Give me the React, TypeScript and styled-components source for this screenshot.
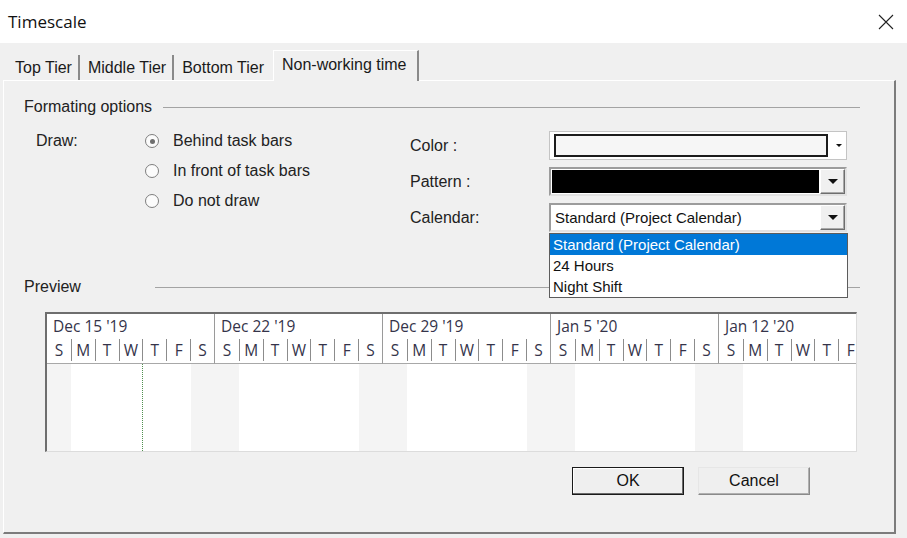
import styled, { createGlobalStyle } from "styled-components"

const GlobalStyle = createGlobalStyle`
html, body {
    margin: 0;
    padding: 0;
    background: #fff;
}
body {
    font-family: "Liberation Sans", Arial, sans-serif;
    color: #222;
}
`

const Window = styled.div`
width: 907px;
height: 538px;
display: flex;
flex-direction: column;
background: #fff;
overflow: hidden;
`

const TitleBar = styled.div`
height: 43px;
flex: none;
display: flex;
align-items: center;
justify-content: space-between;
padding: 0 13px 0 8px;
box-sizing: border-box;
font-family: "Open Sans", "Noto Sans", sans-serif;
font-size: 17px;
color: #111;
`

const CloseButton = styled.div`
width: 16px;
height: 16px;
display: flex;
margin-top: 1px;
`

const DialogBody = styled.div`
flex: 1;
min-height: 0;
display: flex;
flex-direction: column;
background: #f0f0f0;
padding: 7px 11px 4px 3px;
`

const TabStrip = styled.div`
height: 30px;
flex: none;
display: flex;
align-items: flex-end;
padding-left: 4px;
position: relative;
z-index: 1;
`

const Tab = styled.div<{ $active?: boolean; $separator?: boolean }>`
font-size: 16px;
display: flex;
align-items: center;
box-sizing: border-box;
color: #1a1a1a;
${p => p.$active ? `
    height: 31px;
    margin-bottom: -1px;
    padding: 0 11px 3px 8px;
    background: #f0f0f0;
    border-top: 1px solid #fff;
    border-left: 1px solid #fff;
    border-right: 2px solid #8a8a8a;
` : `
    height: 25px;
    padding: 0 ${p.$separator ? 6 : 9}px 0 8px;
    border-right: ${p.$separator ? "2px solid #8a8a8a" : "none"};
`}
`

const Panel = styled.div`
flex: 1;
min-height: 0;
display: flex;
flex-direction: column;
border-top: 1px solid #fff;
border-left: 1px solid #fff;
border-right: 2px solid #7c7c7c;
border-bottom: 2px solid #7c7c7c;
padding: 0 34px 0 20px;
`

const GroupHeader = styled.div<{ $labelWidth: number; $top: number }>`
display: grid;
grid-template-columns: ${p => p.$labelWidth}px 1fr;
align-items: center;
height: 20px;
margin-top: ${p => p.$top}px;
font-size: 16px;
`

const GroupLine = styled.div`
height: 1px;
background: #a3a3a3;
`

const OptionsRow = styled.div`
display: flex;
margin-top: 14px;
font-size: 16px;
`

const DrawLabel = styled.div`
width: 108px;
margin-left: 12px;
height: 20px;
line-height: 20px;
`

const RadioGroup = styled.div`
width: 265px;
padding-left: 1px;
display: flex;
flex-direction: column;
gap: 10px;
`

const RadioRow = styled.div`
height: 20px;
display: flex;
align-items: center;
gap: 14px;
`

const RadioCircle = styled.span<{ $checked?: boolean }>`
width: 14px;
height: 14px;
box-sizing: border-box;
border: 1.5px solid #7e7e7e;
border-radius: 50%;
background: #fbfbfb;
display: flex;
align-items: center;
justify-content: center;
&::after {
    content: "";
    width: 5px;
    height: 5px;
    border-radius: 50%;
    background: ${p => p.$checked ? "#6f6f6f" : "transparent"};
}
`

const Fields = styled.div`
display: grid;
grid-template-columns: 139px 298px;
grid-auto-rows: 29px;
row-gap: 7px;
`

const FieldLabel = styled.div`
display: flex;
align-items: center;
padding-top: 1px;
`

const Combo = styled.div<{ $flat?: boolean }>`
position: relative;
display: flex;
box-sizing: border-box;
background: #fff;
border: ${p => p.$flat ? "1px solid #c4c4c4" : "2px solid"};
border-color: ${p => p.$flat ? "#c4c4c4" : "#9c9c9c #e2e2e2 #e2e2e2 #9c9c9c"};
`

const Swatch = styled.div<{ $fill: string; $outlined?: boolean }>`
flex: 1;
margin: ${p => p.$outlined ? "2px 4px 2px 4px" : "1px"};
background: ${p => p.$fill};
border: ${p => p.$outlined ? "2px solid #1c1c1c" : "none"};
`

const ComboText = styled.div`
flex: 1;
display: flex;
align-items: center;
padding-left: 4px;
font-size: 15px;
color: #111;
`

const Arrow = styled.span<{ $small?: boolean }>`
width: 0;
height: 0;
border-left: ${p => p.$small ? 3 : 5}px solid transparent;
border-right: ${p => p.$small ? 3 : 5}px solid transparent;
border-top: ${p => p.$small ? 3 : 5}px solid #111;
`

const PlainArrowZone = styled.div`
width: 14px;
display: flex;
align-items: center;
justify-content: center;
`

const DropButton = styled.div`
width: 25px;
box-sizing: border-box;
display: flex;
align-items: center;
justify-content: center;
background: #f0f0f0;
border: 1px solid;
border-color: #fff #6e6e6e #6e6e6e #fff;
box-shadow: inset -1px -1px #a8a8a8;
`

const DropList = styled.div`
position: absolute;
top: 28px;
left: -2px;
width: 299px;
box-sizing: border-box;
border: 1px solid #5c5c5c;
background: #fff;
z-index: 5;
font-size: 15px;
`

const DropItem = styled.div<{ $selected?: boolean }>`
height: 21px;
line-height: 21px;
padding-left: 3px;
color: ${p => p.$selected ? "#fff" : "#111"};
background: ${p => p.$selected ? "#0078d7" : "transparent"};
`

const Chart = styled.div`
margin: 15px 0 0 21px;
width: 812px;
height: 140px;
flex: none;
box-sizing: border-box;
display: flex;
overflow: hidden;
background: #fff;
border-top: 2px solid #6e6e6e;
border-left: 2px solid #6e6e6e;
border-right: 1px solid #dcdcdc;
border-bottom: 1px solid #dcdcdc;
font-family: "Open Sans", "Noto Sans", sans-serif;
color: #35344a;
`

const DAY_WIDTH = 167 / 7

const Week = styled.div`
width: 168px;
flex: none;
display: flex;
flex-direction: column;
`

const WeekHead = styled.div`
height: 50px;
box-sizing: border-box;
border-right: 1px solid #9a9a9a;
border-bottom: 1px solid #a8a8a8;
display: flex;
flex-direction: column;
`

const WeekLabel = styled.div`
height: 24px;
line-height: 24px;
padding-left: 6px;
font-size: 15.5px;
white-space: nowrap;
`

const DayRow = styled.div`
flex: 1;
display: flex;
padding: 1px 0 2px;
`

const DayLetter = styled.div<{ $first?: boolean }>`
width: ${DAY_WIDTH}px;
flex: none;
box-sizing: border-box;
display: flex;
align-items: center;
justify-content: center;
font-size: 15.5px;
border-left: ${p => p.$first ? "none" : "1px solid #8c8c8c"};
`

const WeekBody = styled.div`
flex: 1;
display: flex;
`

const DayCell = styled.div<{ $weekend?: boolean; $today?: boolean }>`
flex: 1;
background: ${p => p.$weekend ? "#f4f4f4" : "#fff"};
border-left: ${p => p.$today ? "1px dotted #4f8f4f" : "none"};
`

const ButtonRow = styled.div`
display: flex;
justify-content: flex-end;
gap: 14px;
margin: 15px 50px 0 0;
`

const Button = styled.div<{ $default?: boolean }>`
width: 112px;
height: 28px;
box-sizing: border-box;
display: flex;
align-items: center;
justify-content: center;
font-size: 16px;
color: #111;
background: #efefef;
${p => p.$default ? `
    border: 1px solid #1a1a1a;
    box-shadow: inset -1px -1px #6a6a6a, inset 1px 1px #fff;
` : `
    border: 1px solid;
    border-color: #e6e6e6 #8a8a8a #8a8a8a #e6e6e6;
    box-shadow: inset -1px -1px #b0b0b0;
`}
`

const weeks = ["Dec 15 '19", "Dec 22 '19", "Dec 29 '19", "Jan 5 '20", "Jan 12 '20"]
const days = ["S", "M", "T", "W", "T", "F", "S"]

export default function App() {
    return (
        <Window>
            <GlobalStyle />
            <TitleBar>
                <span>Timescale</span>
                <CloseButton>
                    <svg width="16" height="16" viewBox="0 0 16 16">
                        <path d="M1 1 L15 15 M15 1 L1 15" stroke="#222" strokeWidth="1.1" fill="none" />
                    </svg>
                </CloseButton>
            </TitleBar>
            <DialogBody>
                <TabStrip>
                    <Tab $separator>Top Tier</Tab>
                    <Tab $separator>Middle Tier</Tab>
                    <Tab>Bottom Tier</Tab>
                    <Tab $active>Non-working time</Tab>
                </TabStrip>
                <Panel>
                    <GroupHeader $labelWidth={139} $top={16}>
                        <span>Formating options</span>
                        <GroupLine />
                    </GroupHeader>
                    <OptionsRow>
                        <DrawLabel>Draw:</DrawLabel>
                        <RadioGroup>
                            <RadioRow><RadioCircle $checked />Behind task bars</RadioRow>
                            <RadioRow><RadioCircle />In front of task bars</RadioRow>
                            <RadioRow><RadioCircle />Do not draw</RadioRow>
                        </RadioGroup>
                        <Fields>
                            <FieldLabel>Color :</FieldLabel>
                            <Combo $flat>
                                <Swatch $fill="#f6f6f6" $outlined />
                                <PlainArrowZone><Arrow $small /></PlainArrowZone>
                            </Combo>
                            <FieldLabel>Pattern :</FieldLabel>
                            <Combo>
                                <Swatch $fill="#000" />
                                <DropButton><Arrow /></DropButton>
                            </Combo>
                            <FieldLabel>Calendar:</FieldLabel>
                            <Combo>
                                <ComboText>Standard (Project Calendar)</ComboText>
                                <DropButton><Arrow /></DropButton>
                                <DropList>
                                    <DropItem $selected>Standard (Project Calendar)</DropItem>
                                    <DropItem>24 Hours</DropItem>
                                    <DropItem>Night Shift</DropItem>
                                </DropList>
                            </Combo>
                        </Fields>
                    </OptionsRow>
                    <GroupHeader $labelWidth={131} $top={45}>
                        <span>Preview</span>
                        <GroupLine />
                    </GroupHeader>
                    <Chart>
                        {weeks.map((w, wi) => {
                            // the last week runs past the chart's edge: only its visible days get letters
                            const shown = wi === weeks.length - 1 ? days.slice(0, 6) : days
                            return (
                                <Week key={w}>
                                    <WeekHead>
                                        <WeekLabel>{w}</WeekLabel>
                                        <DayRow>
                                            {shown.map((d, di) => (
                                                <DayLetter key={di} $first={di === 0}>{d}</DayLetter>
                                            ))}
                                        </DayRow>
                                    </WeekHead>
                                    <WeekBody>
                                        {days.map((d, di) => (
                                            <DayCell
                                                key={di}
                                                $weekend={di === 0 || di === 6}
                                                $today={wi === 0 && di === 4}
                                            />
                                        ))}
                                    </WeekBody>
                                </Week>
                            )
                        })}
                    </Chart>
                    <ButtonRow>
                        <Button $default>OK</Button>
                        <Button>Cancel</Button>
                    </ButtonRow>
                </Panel>
            </DialogBody>
        </Window>
    )
}
